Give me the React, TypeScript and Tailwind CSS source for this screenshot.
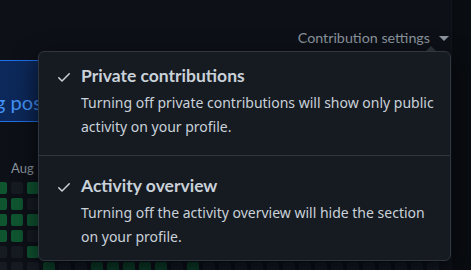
import React from "react";

const G = "#0e4429";
const G2 = "#0f5530";
const E = "#161b22";

const rows: string[][] = [
  [G2, E, G2, E],
  [G2, G2, E, E],
  [G2, G2, G2, E],
  [G2, G2, E, E],
  [E, E, G2, E],
  [E, E, E, G],
];

const bottomRow: Record<number, string> = {};
[43, 91, 107, 123, 139, 155, 187, 236, 252, 268, 284, 300, 348, 364, 380].forEach((x) => {
  bottomRow[x] = G;
});

function Check() {
  return (
    <svg width="16" height="16" viewBox="0 0 16 16" fill="#c9d1d9">
      <path d="M13.78 4.22a.75.75 0 0 1 0 1.06l-7.25 7.25a.75.75 0 0 1-1.06 0L2.22 9.28a.751.751 0 0 1 .018-1.042.751.751 0 0 1 1.042-.018L6 10.94l6.72-6.72a.75.75 0 0 1 1.06 0Z" />
    </svg>
  );
}

function Item({ title, lines, className }: { title: string; lines: string[]; className: string }) {
  return (
    <div className={"flex pl-[17px] pr-3 " + className}>
      <div className="w-[25px] pt-[5px] shrink-0">
        <Check />
      </div>
      <div>
        <div className="text-[17.5px] leading-[24px] font-bold text-[#c9d1d9]">{title}</div>
        <div
          className="mt-[3px] text-[14px] leading-[24px] text-[#c9d1d9]"
          style={{ fontFamily: "'Noto Sans', Lato, sans-serif" }}
        >
          {lines.map((l) => (
            <div key={l}>{l}</div>
          ))}
        </div>
      </div>
    </div>
  );
}

export default function App() {
  return (
    <div
      className="relative w-[471px] h-[270px] overflow-hidden bg-[#0d1117] flex"
      style={{ fontFamily: "Lato, 'Liberation Sans', sans-serif" }}
    >
      <div className="w-[451px] shrink-0 flex flex-col">
        <div className="shrink-0 h-[51px] flex items-start justify-end pt-[28px] pr-[1px]">
          <span className="text-[14.3px] leading-[20px] text-[#8b949e]">Contribution settings</span>
          <svg className="ml-[8px] mt-[4px]" width="12" height="12" viewBox="0 0 12 12" fill="#8b949e">
            <path d="M1 4 h10 L6 9 Z" />
          </svg>
        </div>
        <div className="shrink-0 mt-[9px] ml-[-120px] w-[400px] h-[62px] rounded-md border border-[#1f6feb] bg-gradient-to-r from-[#0c2d6b] to-[#0d1f3a] flex items-center justify-end pr-[230px] pt-[22px]">
          <span className="text-[20px] text-[#4493f8]">Blog post</span>
        </div>
        <div className="shrink-0 mt-[38px] ml-[11px] text-[13px] leading-[16px] text-[#8b949e]">Aug</div>
        <div className="shrink-0 mt-[6px] ml-[-5px] flex flex-col gap-[4px]">
          {rows.map((r, i) => (
            <div key={i} className="flex gap-[4px]">
              {r.map((c, j) => (
                <div key={j} className="w-[12px] h-[12px] rounded-[2px]" style={{ backgroundColor: c }} />
              ))}
              {i === 5 &&
                Array.from({ length: 24 }).map((_, k) => {
                  const x = 59 + k * 16;
                  return (
                    <div
                      key={"b" + k}
                      className="w-[12px] h-[12px] rounded-[2px]"
                      style={{ backgroundColor: bottomRow[x] ?? E }}
                    />
                  );
                })}
            </div>
          ))}
        </div>
      </div>
      <div className="flex-1 bg-[#090c10] border-l border-[#11151b]" />

      <div className="absolute left-[425px] top-[46px] w-0 h-0 border-l-[6px] border-r-[6px] border-b-[6px] border-l-transparent border-r-transparent border-b-[#30363d]" />
      <div className="absolute left-[38px] top-[51px] w-[413px] h-[210px] rounded-[6px] border border-[#30363d] bg-[#161b22] shadow-[0_8px_24px_rgba(1,4,9,0.75)]">
        <Item
          className="pt-[12px] pb-[16px] border-b border-[#30363d]"
          title="Private contributions"
          lines={["Turning off private contributions will show only public", "activity on your profile."]}
        />
        <Item
          className="pt-[18px]"
          title="Activity overview"
          lines={["Turning off the activity overview will hide the section", "on your profile."]}
        />
      </div>
    </div>
  );
}
